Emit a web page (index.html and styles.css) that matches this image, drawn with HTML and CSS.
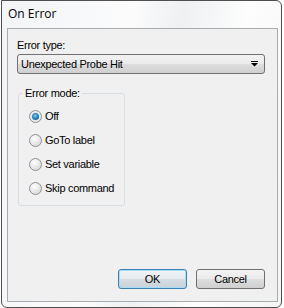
FILE: index.html
```html
<!DOCTYPE html>
<html>
<head>
<meta charset="utf-8">
<link rel="stylesheet" href="styles.css">
</head>
<body>
<div class="window">
  <div class="titlebar">On Error</div>
  <div class="panel">
    <div class="label">Error type:</div>
    <div class="combo">
      <span class="combo-text">Unexpected Probe Hit</span>
      <svg class="combo-arrow" width="8" height="6" viewBox="0 0 8 6"><rect x="0" y="0" width="7" height="1" fill="#000"/><polygon points="0,2 7,2 3.5,5.5" fill="#000"/></svg>
    </div>
    <fieldset class="group">
      <legend class="group-title">Error mode:</legend>
      <div class="radio-row"><span class="radio checked"><span class="dot"></span></span><span class="radio-label">Off</span></div>
      <div class="radio-row"><span class="radio"></span><span class="radio-label">GoTo label</span></div>
      <div class="radio-row"><span class="radio"></span><span class="radio-label">Set variable</span></div>
      <div class="radio-row"><span class="radio"></span><span class="radio-label">Skip command</span></div>
    </fieldset>
    <div class="spacer"></div>
    <div class="buttons">
      <button class="btn default">OK</button>
      <button class="btn">Cancel</button>
    </div>
  </div>
</div>
</body>
</html>
```
FILE: styles.css
```css
html, body {
  margin: 0;
  padding: 0;
  background: #ffffff;
}
body {
  width: 284px;
  height: 308px;
  overflow: hidden;
  font-family: "Liberation Sans", Arial, sans-serif;
  font-size: 11px;
  letter-spacing: -0.3px;
  color: #000;
}
.window {
  margin-left: 1px;
  width: 279px;
  height: 306px;
  border: 1px solid #4f4f4f;
  border-radius: 0 6px 6px 6px;
  background: linear-gradient(100deg, #f2f4f6 0%, #fbfbfc 40%, #eef0f2 55%, #fdfdfd 75%, #f3f4f5 100%);
  display: flex;
  flex-direction: column;
}
.titlebar {
  height: 27px;
  padding-left: 6px;
  line-height: 26px;
  font-family: "Open Sans", "Liberation Sans", sans-serif;
  font-size: 12px;
  letter-spacing: 0;
  color: #000;
}
.panel {
  margin: 0 3px 5px 5px;
  flex: 1;
  border: 1px solid #a9acae;
  background: #f0f0f0;
  display: flex;
  flex-direction: column;
  padding: 9px 12px 12px 9px;
}
.label {
  line-height: 14px;
  height: 14px;
}
.combo {
  margin-top: 2px;
  height: 18px;
  border: 1px solid #707070;
  border-radius: 3px;
  background: linear-gradient(#f2f2f2 0%, #ebebeb 48%, #dddddd 52%, #cfcfcf 100%);
  display: flex;
  align-items: center;
  padding: 0 5px 0 3px;
}
.combo-text {
  flex: 1;
}
.combo-arrow {
  display: block;
}
.group {
  margin: 12px 0 0 1px;
  width: 101px;
  border: 1px solid #d5dfe5;
  border-radius: 3px;
  padding: 0 0 5px 4px;
  box-sizing: content-box;
}
.group-title {
  padding: 0 2px;
  line-height: 14px;
}
.radio-row {
  height: 24px;
  display: flex;
  align-items: center;
  padding-left: 6px;
}
.radio-row:first-of-type {
  margin-top: 4px;
}
.radio {
  width: 11px;
  height: 11px;
  border: 1px solid #8f9294;
  border-radius: 50%;
  background: radial-gradient(circle at 40% 35%, #ffffff 0%, #eaeaea 45%, #cfcfcf 100%);
  display: flex;
  align-items: center;
  justify-content: center;
  margin-right: 3px;
}
.radio.checked {
  background: radial-gradient(circle, #f4f4f4 0%, #e0e0e0 100%);
}
.dot {
  width: 7px;
  height: 7px;
  border-radius: 50%;
  background: radial-gradient(circle at 45% 40%, #8fd0f5 0%, #2f8ac4 40%, #0d4d80 100%);
}
.spacer {
  flex: 1;
}
.buttons {
  display: flex;
  justify-content: flex-end;
  gap: 9px;
}
.btn {
  width: 69px;
  height: 20px;
  border: 1px solid #707070;
  border-radius: 3px;
  background: linear-gradient(#f2f2f2 0%, #ebebeb 48%, #dddddd 52%, #cfcfcf 100%);
  font-family: "Liberation Sans", Arial, sans-serif;
  font-size: 11px;
  letter-spacing: -0.3px;
  color: #000;
  padding: 0;
  margin: 0;
}
.btn.default {
  border-color: #3c7fb1;
  box-shadow: inset 0 0 0 1px #a9dcf6;
  background: linear-gradient(#f0f4f7 0%, #e6ebef 48%, #d6dde3 52%, #c9d2d9 100%);
}
```
